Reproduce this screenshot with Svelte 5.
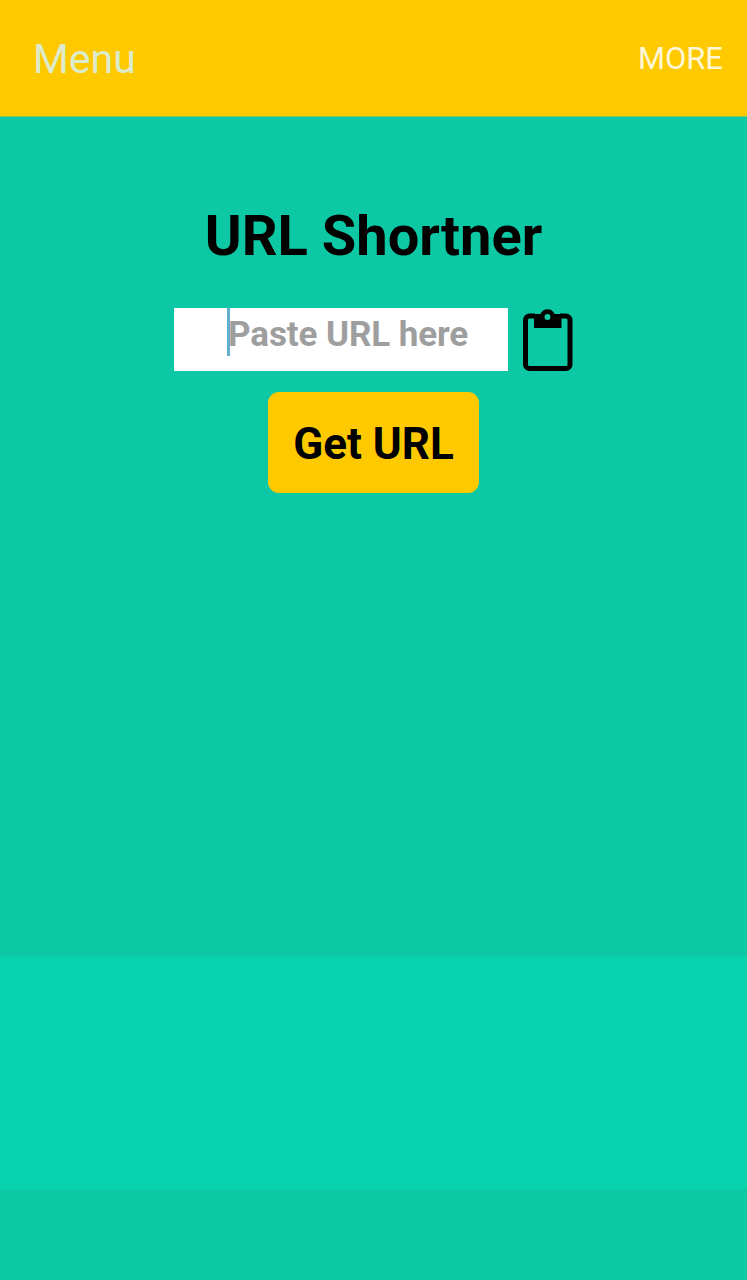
<script>
  let url = $state('');
</script>

<div class="page">
  <header class="bar">
    <span class="menu">Menu</span>
    <span class="more">MORE</span>
  </header>
  <main class="content">
    <h1>URL Shortner</h1>
    <div class="field-row">
      <div class="field">
        <span class="caret"></span>
        <input bind:value={url} placeholder="Paste URL here" aria-label="URL" />
      </div>
      <svg class="clip" viewBox="0 0 50 63" width="50" height="63" aria-label="Paste from clipboard">
        <path d="M12 8H6A4 4 0 0 0 2.5 12V56.5A4 4 0 0 0 6.5 60.5H43A4 4 0 0 0 47 56.5V12A4 4 0 0 0 43 8H37" fill="none" stroke="#000" stroke-width="5" />
        <path fill-rule="evenodd" d="M11 6H17.5A7.5 7.5 0 0 1 31.5 6H38.5V20H11ZM24.5 6a3 3 0 1 0 0 6 3 3 0 0 0 0-6Z" fill="#000" />
      </svg>
    </div>
    <button class="go">Get URL</button>
  </main>
</div>

<style>
  :global(body) {
    margin: 0;
    font-family: Roboto, "Liberation Sans", sans-serif;
  }
  .page {
    min-height: 1280px;
    display: flex;
    flex-direction: column;
    background: linear-gradient(
      to bottom,
      #0dc8a5 0,
      #0dc8a5 956px,
      #06d3ad 957px,
      #06d3ad 1189px,
      #0dc8a5 1190px
    );
  }
  .bar {
    height: 114px;
    display: flex;
    align-items: center;
    justify-content: space-between;
    padding: 2px 24px 0 33px;
    background: #ffc900;
    border-bottom: 1px solid #7fc95a;
  }
  .menu {
    font-size: 41px;
    color: #dcebcb;
  }
  .more {
    font-size: 31px;
    color: #fdf7d8;
    margin-bottom: 1px;
  }
  .content {
    display: flex;
    flex-direction: column;
    align-items: center;
    padding-top: 87px;
  }
  h1 {
    margin: 0;
    font-size: 56px;
    line-height: 64px;
    font-weight: 700;
    color: #000;
  }
  .field-row {
    margin-top: 40px;
    display: flex;
    align-items: flex-start;
    gap: 15px;
  }
  .field {
    position: relative;
    width: 334px;
    height: 63px;
    background: #fff;
  }
  .caret {
    position: absolute;
    left: 53px;
    top: 0;
    width: 3px;
    height: 48px;
    background: #62afd0;
  }
  input {
    display: block;
    box-sizing: border-box;
    width: 100%;
    height: 52px;
    border: 0;
    outline: 0;
    background: transparent;
    padding: 0 0 0 54px;
    font: 700 35px Roboto, "Liberation Sans", sans-serif;
    letter-spacing: -0.1px;
    color: #000;
  }
  input::placeholder {
    color: #9e9e9e;
    opacity: 1;
  }
  .clip {
    display: block;
  }
  .go {
    margin-top: 21px;
    width: 211px;
    height: 101px;
    border: 0;
    border-radius: 11px;
    background: #ffc900;
    color: #000;
    font: 700 44px Roboto, "Liberation Sans", sans-serif;
    padding: 3px 0 0;
  }
</style>
